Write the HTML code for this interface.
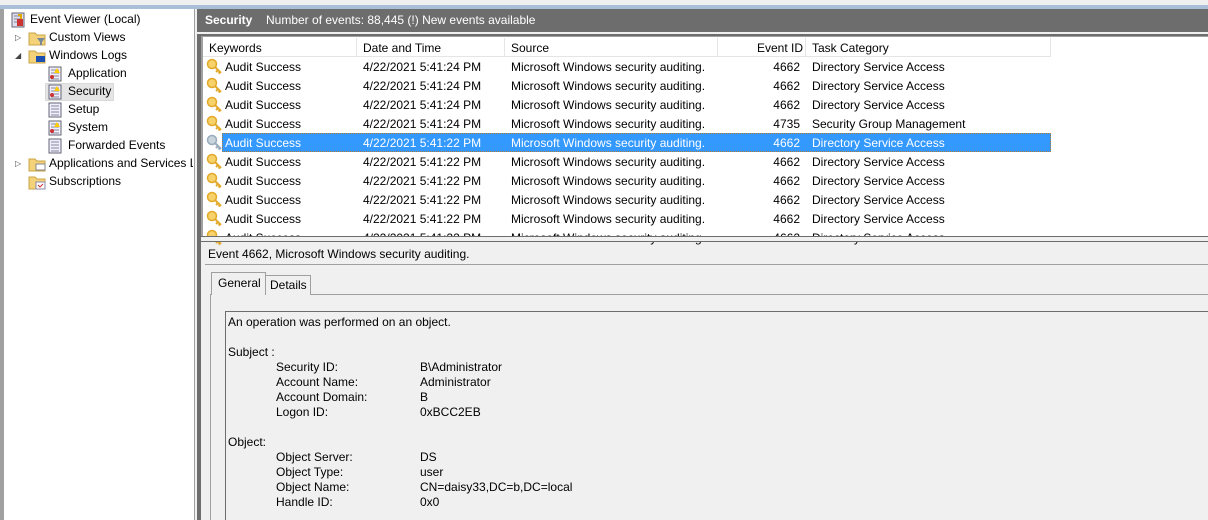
<!DOCTYPE html>
<html><head><meta charset="utf-8">
<style>
*{margin:0;padding:0;box-sizing:border-box}
body{width:1208px;height:520px;overflow:hidden;background:#f0f0f0;font-family:"Liberation Sans",sans-serif;font-size:12px;color:#000;position:relative}
.a{position:absolute;white-space:nowrap}
.row{position:absolute;left:203px;width:1005px;height:19px}
.row span{position:absolute;top:2px;white-space:nowrap}
.sel{background:#3399ff;color:#fff}
</style></head><body>
<div class="a" style="left:0;top:0;width:1208px;height:5px;background:#f0f0f0"></div>
<div class="a" style="left:0;top:5px;width:1208px;height:4px;background:#a9bfd9"></div>
<!-- left panel -->
<div class="a" style="left:0;top:9px;width:4px;height:511px;background:#a0a0a0"></div>
<div class="a" style="left:4px;top:9px;width:191px;height:511px;background:#fff;border-right:1px solid #a0a0a0"></div>
<div class="a" style="left:196px;top:9px;width:3px;height:511px;background:#f0f0f0"></div>
<div class="a" style="left:45px;top:83px;width:69px;height:18px;background:#e5e5e5;border:1px solid #d9d9d9"></div>

<svg class="a" style="left:10px;top:12px" width="16" height="16"><rect x="2" y="1" width="12" height="14" fill="#dde" stroke="#667"/><path d="M4 4h8M4 7h8M4 10h8" stroke="#889"/><rect x="7" y="7" width="6" height="7" fill="#c33"/><path d="M8 3l3 0 0 4" stroke="#da0" stroke-width="2" fill="none"/></svg>
<div class="a" style="left:30px;top:12px">Event Viewer (Local)</div>

<div class="a" style="left:15px;top:33px;font-size:8px;color:#444">▷</div>
<svg class="a" style="left:28px;top:30px" width="18" height="16"><path d="M1 3h6l2 2h8v10H1z" fill="#f4d27a" stroke="#c9a445"/><path d="M9 8h8l-3 4v3h-2v-3z" fill="#789"/></svg>
<div class="a" style="left:49px;top:30px">Custom Views</div>

<div class="a" style="left:15px;top:51px;font-size:8px;color:#444">◢</div>
<svg class="a" style="left:28px;top:48px" width="18" height="16"><path d="M1 3h6l2 2h8v10H1z" fill="#f4d27a" stroke="#c9a445"/><rect x="8" y="8" width="9" height="6" fill="#1a4fb0"/></svg>
<div class="a" style="left:49px;top:48px">Windows Logs</div>

<svg class="a" style="left:48px;top:66px" width="14" height="16"><rect x="1" y="1" width="12" height="14" fill="#eef" stroke="#667"/><path d="M3 4h8M3 7h8M3 10h8M3 13h8" stroke="#889"/><circle cx="4" cy="11" r="2" fill="#c33"/><path d="M9 2l3 5h-6z" fill="#fc0"/></svg>
<div class="a" style="left:68px;top:66px">Application</div>
<svg class="a" style="left:48px;top:84px" width="14" height="16"><rect x="1" y="1" width="12" height="14" fill="#eef" stroke="#667"/><path d="M3 4h8M3 7h8M3 10h8M3 13h8" stroke="#889"/><circle cx="4" cy="11" r="2" fill="#c33"/><path d="M9 2l3 5h-6z" fill="#fc0"/></svg>
<div class="a" style="left:68px;top:84px">Security</div>
<svg class="a" style="left:48px;top:102px" width="14" height="16"><rect x="1" y="1" width="12" height="14" fill="#eef" stroke="#667"/><path d="M3 4h8M3 7h8M3 10h8M3 13h8" stroke="#889"/></svg>
<div class="a" style="left:68px;top:102px">Setup</div>
<svg class="a" style="left:48px;top:120px" width="14" height="16"><rect x="1" y="1" width="12" height="14" fill="#eef" stroke="#667"/><path d="M3 4h8M3 7h8M3 10h8M3 13h8" stroke="#889"/><circle cx="4" cy="11" r="2" fill="#c33"/><path d="M9 2l3 5h-6z" fill="#fc0"/></svg>
<div class="a" style="left:68px;top:120px">System</div>
<svg class="a" style="left:48px;top:138px" width="14" height="16"><rect x="1" y="1" width="12" height="14" fill="#eef" stroke="#667"/><path d="M3 4h8M3 7h8M3 10h8M3 13h8" stroke="#889"/></svg>
<div class="a" style="left:68px;top:138px">Forwarded Events</div>

<div class="a" style="left:15px;top:159px;font-size:8px;color:#444">▷</div>
<svg class="a" style="left:28px;top:156px" width="18" height="16"><path d="M1 3h6l2 2h8v10H1z" fill="#f4d27a" stroke="#c9a445"/><rect x="8" y="8" width="9" height="6" fill="#fff" stroke="#888"/></svg>
<div class="a" style="left:49px;top:156px;width:144px;overflow:hidden">Applications and Services Logs</div>
<svg class="a" style="left:28px;top:174px" width="18" height="16"><path d="M1 3h6l2 2h8v10H1z" fill="#f4d27a" stroke="#c9a445"/><rect x="8" y="8" width="9" height="7" fill="#fff" stroke="#88a"/><path d="M10 11l2 2 3-3" stroke="#c33" fill="none"/></svg>
<div class="a" style="left:49px;top:174px">Subscriptions</div>

<!-- header bar -->
<div class="a" style="left:197px;top:9px;width:1011px;height:23px;background:#6d6d6d;color:#fff"></div>
<div class="a" style="left:205px;top:13px;color:#fff;font-weight:bold">Security</div>
<div class="a" style="left:266px;top:13px;color:#fff">Number of events: 88,445 (!) New events available</div>
<div class="a" style="left:197px;top:32px;width:1011px;height:2px;background:#f0f0f0"></div>
<div class="a" style="left:197px;top:34px;width:1011px;height:2px;background:#6d6d6d"></div>

<!-- list -->
<div class="a" style="left:197px;top:36px;width:4px;height:484px;background:#6d6d6d"></div>
<div class="a" style="left:201px;top:36px;width:1007px;height:201px;background:#fff;border-left:2px solid #a0a0a0;border-top:1px solid #a0a0a0;overflow:hidden">
</div>
<div class="a" style="left:203px;top:38px;width:848px;height:19px;background:#fff;border-bottom:1px solid #e5e5e5"></div>
<div class="a" style="left:356px;top:38px;width:1px;height:18px;background:#e5e5e5"></div>
<div class="a" style="left:504px;top:38px;width:1px;height:18px;background:#e5e5e5"></div>
<div class="a" style="left:717px;top:38px;width:1px;height:18px;background:#e5e5e5"></div>
<div class="a" style="left:805px;top:38px;width:1px;height:18px;background:#e5e5e5"></div>
<div class="a" style="left:1050px;top:38px;width:1px;height:18px;background:#e5e5e5"></div>
<div class="a" style="left:209px;top:41px">Keywords</div>
<div class="a" style="left:363px;top:41px">Date and Time</div>
<div class="a" style="left:511px;top:41px">Source</div>
<div class="a" style="left:757px;top:41px">Event ID</div>
<div class="a" style="left:812px;top:41px">Task Category</div>

<div id="rows"></div>
<script>
var r=[["24","4662","Directory Service Access"],["24","4662","Directory Service Access"],["24","4662","Directory Service Access"],["24","4735","Security Group Management"],["22","4662","Directory Service Access"],["22","4662","Directory Service Access"],["22","4662","Directory Service Access"],["22","4662","Directory Service Access"],["22","4662","Directory Service Access"],["22","4662","Directory Service Access"]];
var h="";
for(var i=0;i<r.length;i++){var t=57+i*19;var s=i==4;
var kc=s?"#9ab":"#e2a92a";
h+='<svg class="a" style="left:206px;top:'+(t+1)+'px" width="17" height="17"><circle cx="6" cy="6" r="4.5" fill="'+(s?"#c8d4dc":"#f7d26a")+'" stroke="'+kc+'" stroke-width="1.5"/><path d="M9 9l6 6M12 12l-2 2M14 14l-1.5 1.5" stroke="'+kc+'" stroke-width="2" fill="none"/></svg>';
if(s)h+='<div class="a" style="left:222px;top:'+t+'px;width:829px;height:19px;background:#3399ff;border:1px dotted #b07a3a"></div>';
var c=s?"#fff":"#000";
h+='<div class="a" style="left:225px;top:'+(t+3)+'px;color:'+c+'">Audit Success</div>';
h+='<div class="a" style="left:363px;top:'+(t+3)+'px;color:'+c+'">4/22/2021 5:41:'+r[i][0]+' PM</div>';
h+='<div class="a" style="left:511px;top:'+(t+3)+'px;color:'+c+'">Microsoft Windows security auditing.</div>';
h+='<div class="a" style="left:700px;width:100px;text-align:right;top:'+(t+3)+'px;color:'+c+'">'+r[i][1]+'</div>';
h+='<div class="a" style="left:812px;top:'+(t+3)+'px;color:'+c+'">'+r[i][2]+'</div>';}
document.getElementById("rows").innerHTML=h;
</script>
<div class="a" style="left:201px;top:236px;width:1007px;height:1px;background:#6d6d6d"></div>
<div class="a" style="left:201px;top:237px;width:1007px;height:5px;background:#f0f0f0"></div>
<div class="a" style="left:199px;top:241px;width:1009px;height:1px;background:#6d6d6d"></div>

<!-- details -->
<div class="a" style="left:208px;top:247px">Event 4662, Microsoft Windows security auditing.</div>
<div class="a" style="left:205px;top:264px;width:1003px;height:1px;background:#a0a0a0"></div>
<div class="a" style="left:210px;top:294px;width:1px;height:226px;background:#a0a0a0"></div>
<div class="a" style="left:210px;top:294px;width:998px;height:1px;background:#a0a0a0"></div>
<div class="a" style="left:265px;top:275px;width:46px;height:20px;border:1px solid #a0a0a0;border-bottom:none;background:#f0f0f0"></div>
<div class="a" style="left:270px;top:278px">Details</div>
<div class="a" style="left:211px;top:272px;width:55px;height:23px;border:1px solid #a0a0a0;border-bottom:none;background:#f0f0f0"></div>
<div class="a" style="left:218px;top:276px">General</div>
<div class="a" style="left:225px;top:311px;width:983px;height:209px;border-left:1px solid #6d6d6d;border-top:1px solid #6d6d6d"></div>
<div class="a" style="left:228px;top:315px">An operation was performed on an object.</div>
<div class="a" style="left:228px;top:345px">Subject :</div>
<div class="a" style="left:276px;top:360px;line-height:15px">Security ID:<br>Account Name:<br>Account Domain:<br>Logon ID:</div>
<div class="a" style="left:420px;top:360px;line-height:15px">B\Administrator<br>Administrator<br>B<br>0xBCC2EB</div>
<div class="a" style="left:228px;top:435px">Object:</div>
<div class="a" style="left:276px;top:450px;line-height:15px">Object Server:<br>Object Type:<br>Object Name:<br>Handle ID:</div>
<div class="a" style="left:420px;top:450px;line-height:15px">DS<br>user<br>CN=daisy33,DC=b,DC=local<br>0x0</div>
</body></html>
